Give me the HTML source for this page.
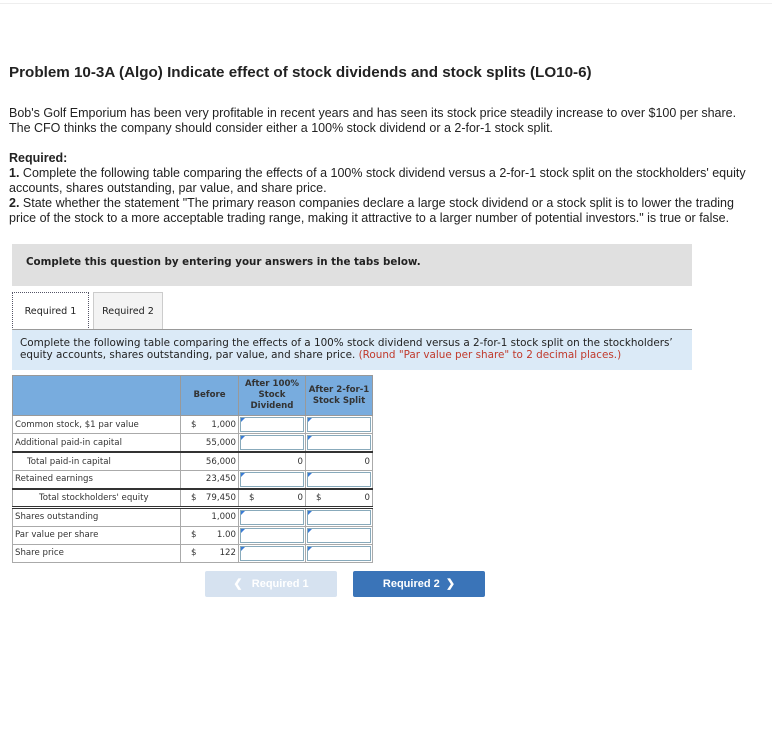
<!DOCTYPE html>
<html><head><meta charset="utf-8"><style>
*{box-sizing:border-box;margin:0;padding:0}
body{width:772px;height:738px;background:#fff;font-family:"Liberation Sans",sans-serif;color:#222;position:relative;overflow:hidden}
.abs{position:absolute}
.topline{left:0;top:3px;width:772px;height:1px;background:#eee}
h1{position:absolute;left:9px;top:64px;font-size:15.2px;font-weight:bold;color:#222}
.p{position:absolute;left:9px;font-size:12.5px;line-height:15px;color:#222;white-space:nowrap}
.gray{left:12px;top:244px;width:680px;height:42px;background:#e0e0e0;font-family:"DejaVu Sans",sans-serif;font-size:10.3px;font-weight:bold;padding:12px 0 0 14px}
.tab{top:292px;height:38px;font-family:"DejaVu Sans",sans-serif;font-size:9.6px;text-align:center;line-height:38px}
.t1{left:12px;width:77px;border:1px dotted #556;border-bottom:none;background:#fff}
.t2{left:93px;width:70px;border:1px solid #ccc;border-bottom:none;background:#f3f3f3}
.line{left:12px;top:329px;width:680px;height:1px;background:#999}
.info{left:12px;top:330px;width:680px;height:40px;background:#dbeaf7;font-family:"DejaVu Sans",sans-serif;font-size:10.4px;line-height:12px;padding:7px 0 0 8px;white-space:nowrap}
.red{color:#c0392b}
table{position:absolute;left:12px;top:375px;border-collapse:collapse;font-family:"DejaVu Sans",sans-serif;font-size:8.6px;color:#333}
td{border:1px solid #aaa;height:18.2px;padding:0 2px}
th{background:#78acde;border:1px solid #999;height:40px;font-size:8.6px;font-weight:bold;color:#333;line-height:11px}
.c1{width:168px}.c2{width:58px}.c3{width:67px}.c4{width:67px}
.r{text-align:right}
.in{position:relative;padding:1px}
.in div{border:1px solid #8ab;height:15px;position:relative;background:#fff}
.in div:before{content:"";position:absolute;left:0;top:0;border-left:4px solid #3a7bd5;border-bottom:4px solid transparent}
.thick td{border-bottom:2px solid #333}
.dbl td{border-bottom:3px double #333}
.btn{top:571px;width:132px;height:26px;border-radius:2px;color:#fff;font-size:11px;font-weight:bold;text-align:center;line-height:26px}
</style></head><body>
<div class="abs topline"></div>
<h1>Problem 10-3A (Algo) Indicate effect of stock dividends and stock splits (LO10-6)</h1>
<div class="p" style="top:106px">Bob's Golf Emporium has been very profitable in recent years and has seen its stock price steadily increase to over $100 per share.<br>The CFO thinks the company should consider either a 100% stock dividend or a 2-for-1 stock split.</div>
<div class="p" style="top:151px"><b>Required:</b><br><b>1.</b> Complete the following table comparing the effects of a 100% stock dividend versus a 2-for-1 stock split on the stockholders' equity<br>accounts, shares outstanding, par value, and share price.<br><b>2.</b> State whether the statement "The primary reason companies declare a large stock dividend or a stock split is to lower the trading<br>price of the stock to a more acceptable trading range, making it attractive to a larger number of potential investors." is true or false.</div>
<div class="abs gray">Complete this question by entering your answers in the tabs below.</div>
<div class="abs tab t1">Required 1</div>
<div class="abs tab t2">Required 2</div>
<div class="abs line"></div>
<div class="abs info">Complete the following table comparing the effects of a 100% stock dividend versus a 2-for-1 stock split on the stockholders’<br>equity accounts, shares outstanding, par value, and share price. <span class="red">(Round "Par value per share" to 2 decimal places.)</span></div>
<table>
<tr><th class="c1"></th><th class="c2">Before</th><th class="c3">After 100%<br>Stock<br>Dividend</th><th class="c4">After 2-for-1<br>Stock Split</th></tr>
<tr><td>Common stock, $1 par value</td><td class="r"><span style="float:left;padding-left:8px">$</span>1,000</td><td class="in"><div></div></td><td class="in"><div></div></td></tr>
<tr class="thick"><td>Additional paid-in capital</td><td class="r">55,000</td><td class="in"><div></div></td><td class="in"><div></div></td></tr>
<tr><td style="padding-left:14px">Total paid-in capital</td><td class="r">56,000</td><td class="r">0</td><td class="r">0</td></tr>
<tr class="thick"><td>Retained earnings</td><td class="r">23,450</td><td class="in"><div></div></td><td class="in"><div></div></td></tr>
<tr class="dbl"><td style="padding-left:26px">Total stockholders' equity</td><td class="r"><span style="float:left;padding-left:8px">$</span>79,450</td><td class="r"><span style="float:left;padding-left:8px">$</span>0</td><td class="r"><span style="float:left;padding-left:8px">$</span>0</td></tr>
<tr><td>Shares outstanding</td><td class="r">1,000</td><td class="in"><div></div></td><td class="in"><div></div></td></tr>
<tr><td>Par value per share</td><td class="r"><span style="float:left;padding-left:8px">$</span>1.00</td><td class="in"><div></div></td><td class="in"><div></div></td></tr>
<tr><td>Share price</td><td class="r"><span style="float:left;padding-left:8px">$</span>122</td><td class="in"><div></div></td><td class="in"><div></div></td></tr>
</table>
<div class="abs btn" style="left:205px;background:#d6e2f0">&#10094;&nbsp;&nbsp; Required 1</div>
<div class="abs btn" style="left:353px;background:#3a74b8">Required 2 &nbsp;&#10095;</div>
</body></html>
